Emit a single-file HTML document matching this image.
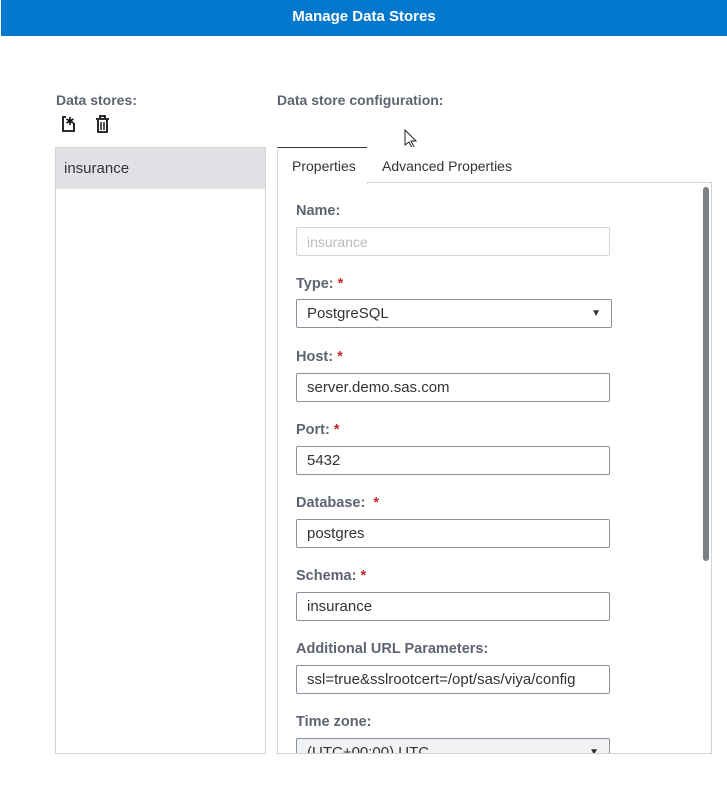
<!DOCTYPE html>
<html><head><style>
body{margin:0;width:727px;height:785px;background:#fff;font-family:"Liberation Sans",sans-serif;position:relative;overflow:hidden}
.hdr{position:absolute;left:1px;top:0;width:726px;height:36px;background:#0378cd;color:#fff;font-weight:bold;font-size:15px;text-align:center;line-height:34px}
.ttl{position:absolute;font-weight:bold;font-size:14px;color:#5d6470}
.list{position:absolute;left:55px;top:147px;width:209px;height:605px;border:1px solid #d2d4d8}
.sel{height:41px;background:#e0e1e5;font-size:15px;color:#333;line-height:41px;padding-left:8px}
.panel{position:absolute;left:277px;top:182px;width:433px;height:570px;border:1px solid #d2d4d8;overflow:hidden}
.tab{position:absolute;top:147px;height:36px;font-size:14px;color:#333;line-height:38px}
.lbl{position:absolute;left:18px;font-weight:bold;font-size:14.5px;color:#5d6470}
.lbl b{color:#c0282d}
.in{position:absolute;left:18px;width:302px;height:27px;border:1px solid #8a919c;font-size:15px;color:#333;line-height:28px;padding-left:10px;white-space:nowrap;overflow:hidden;border-radius:2px}
.sb{position:absolute;left:425px;top:4px;width:6px;height:374px;background:#7c7f84;border-radius:3px}
</style></head><body>
<div class="hdr">Manage Data Stores</div>
<div class="ttl" style="left:56px;top:92px">Data stores:</div>
<div class="ttl" style="left:277px;top:92px">Data store configuration:</div>
<svg style="position:absolute;left:61px;top:115px" width="16" height="18" viewBox="0 0 16 18"><path d="M5 2H2v14h11v-8" fill="none" stroke="#111" stroke-width="1.8"/><path d="M9 2v8M5.5 4l7 4M12.5 4l-7 4" stroke="#111" stroke-width="1.6"/></svg>
<svg style="position:absolute;left:95px;top:115px" width="15" height="18" viewBox="0 0 15 18"><path d="M1 4h13M5 3V1h5v2M3 5v12h9V5" fill="none" stroke="#111" stroke-width="1.8"/><path d="M6 7v8M9 7v8" stroke="#111" stroke-width="1.4"/></svg>
<svg style="position:absolute;left:404px;top:129px" width="14" height="20" viewBox="0 0 14 20"><path d="M1 1v15l4-3 3 6 2-1-3-6h5z" fill="#fff" stroke="#222" stroke-width="1"/></svg>
<div class="list"><div class="sel">insurance</div></div>
<div class="panel">
<div class="sb"></div>
<div class="lbl" style="top:20px">Name:</div>
<div class="in" style="top:44px;border-color:#d2d4d8;color:#bbb;font-size:14px">insurance</div>
<div class="lbl" style="top:93px">Type: <b>*</b></div>
<div class="in" style="top:116px;width:304px">PostgreSQL<span style="position:absolute;right:10px;font-size:10px">▼</span></div>
<div class="lbl" style="top:166px">Host: <b>*</b></div>
<div class="in" style="top:190px">server.demo.sas.com</div>
<div class="lbl" style="top:239px">Port: <b>*</b></div>
<div class="in" style="top:263px">5432</div>
<div class="lbl" style="top:312px">Database: &nbsp;<b>*</b></div>
<div class="in" style="top:336px">postgres</div>
<div class="lbl" style="top:385px">Schema: <b>*</b></div>
<div class="in" style="top:409px">insurance</div>
<div class="lbl" style="top:458px">Additional URL Parameters:</div>
<div class="in" style="top:482px">ssl=true&amp;sslrootcert=/opt/sas/viya/config</div>
<div class="lbl" style="top:531px">Time zone:</div>
<div class="in" style="top:555px;background:#f1f2f4">(UTC+00:00) UTC<span style="position:absolute;right:10px;font-size:10px">▼</span></div>
</div>
<div style="position:absolute;left:277px;top:147px;width:89px;height:36px;border:1px solid #d2d4d8;border-top:1px solid #333;border-bottom:none;background:#fff"></div>
<div style="position:absolute;left:367px;top:147px;width:158px;height:35px;background:#fff"></div>
<div class="tab" style="left:292px">Properties</div>
<div class="tab" style="left:382px">Advanced Properties</div>
</body></html>
